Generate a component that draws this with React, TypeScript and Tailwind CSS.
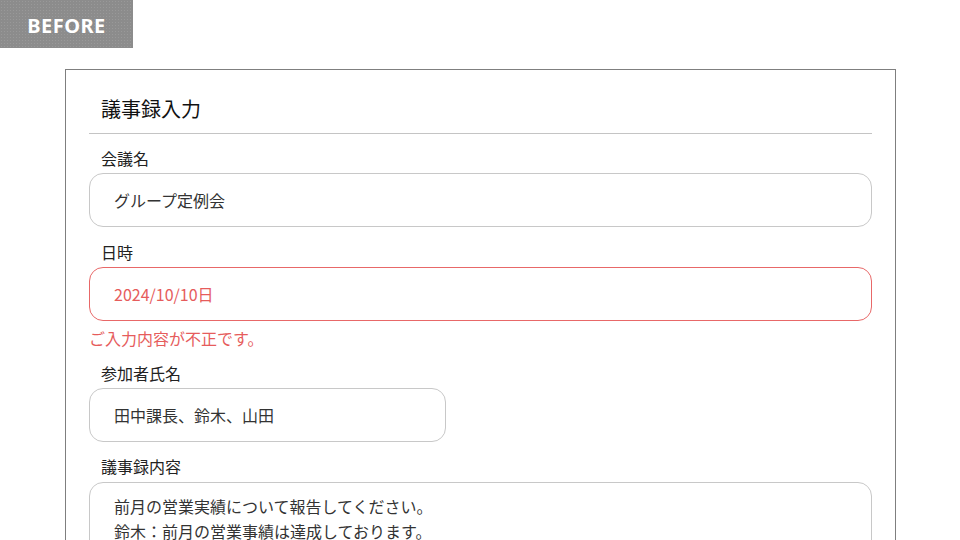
import React from 'react';

const Field: React.FC<{ label: string; children: React.ReactNode; className?: string }> = ({ label, children, className }) => (
  <div className={className}>
    <p className="pl-3 text-[16px] leading-[24px] text-[#222]">{label}</p>
    {children}
  </div>
);

const App: React.FC = () => {
  return (
    <div className="min-h-[540px] bg-white font-['Noto_Sans_CJK_JP','Noto_Sans',sans-serif] text-[#222]">
      <div className="flex h-[48px] w-[133px] items-center justify-center bg-[#8c8c8c] bg-[radial-gradient(#999_0.5px,transparent_0.7px)] bg-[length:3px_3px] pt-[3px]">
        <span className="text-[20px] font-bold tracking-wide text-white font-['Noto_Sans',sans-serif]">BEFORE</span>
      </div>

      <div className="ml-[65px] mt-[21px] w-[831px] border border-[#7f7f7f] px-[23px] pt-[24px] pb-6">
        <h1 className="border-b border-[#c4c4c4] pb-[9px] pl-3 text-[20px] leading-[30px] text-[#111]">議事録入力</h1>

        <Field label="会議名" className="mt-3">
          <div className="mt-[3px] flex h-[54px] items-center rounded-[14px] border border-[#c8c8c8] px-6 text-[16px] text-[#333]">
            グループ定例会
          </div>
        </Field>

        <Field label="日時" className="mt-[13px]">
          <div className="mt-[3px] flex h-[54px] items-center rounded-[14px] border border-[#e86868] px-6 text-[16px] text-[#e65c5c]">
            2024/10/10日
          </div>
          <p className="mt-[5px] text-[16px] leading-[24px] text-[#e65c5c]">ご入力内容が不正です。</p>
        </Field>

        <Field label="参加者氏名" className="mt-[11px]">
          <div className="mt-[3px] flex h-[54px] w-[357px] items-center rounded-[14px] border border-[#c8c8c8] px-6 text-[16px] text-[#333]">
            田中課長、鈴木、山田
          </div>
        </Field>

        <Field label="議事録内容" className="mt-3">
          <div className="mt-1 h-[140px] rounded-[14px] border border-[#c8c8c8] px-6 pt-[11px] text-[16px] leading-[25px] text-[#333]">
            <p>前月の営業実績について報告してください。</p>
            <p>鈴木：前月の営業事績は達成しております。</p>
          </div>
        </Field>
      </div>
    </div>
  );
};

export default App;
